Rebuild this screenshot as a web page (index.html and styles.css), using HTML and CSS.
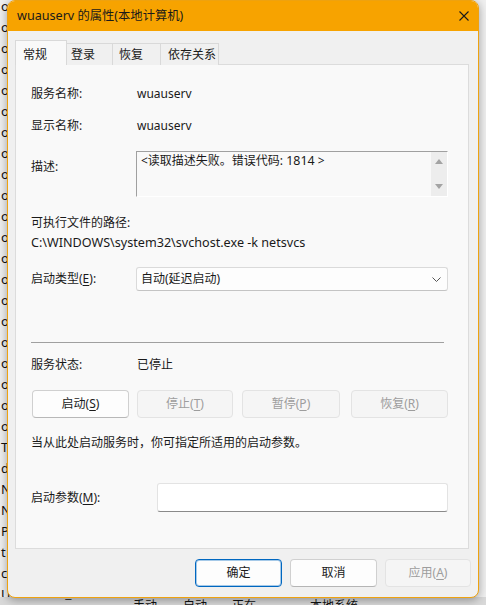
FILE: index.html
```html
<!DOCTYPE html>
<html lang="zh-CN">
<head>
<meta charset="utf-8">
<title>wuauserv 的属性(本地计算机)</title>
<link rel="stylesheet" href="styles.css">
</head>
<body>
<div class="desktop">
  <div class="bg-col">o<br>o<br>o<br>o<br>o<br>o<br>o<br>o<br>o<br>o<br>o<br>o<br>o<br>o<br>o<br>o<br>o<br>o<br>o<br>o<br>o<br>T<br>d<br>N<br>N<br>P<br>t<br>cs<br>Us</div>
  <div class="bg-bottom"><span class="b1">_</span><span class="b2">手动</span><span class="b3">自动</span><span class="b4">正在</span><span class="b5">本地系统</span></div>

  <div class="window">
    <div class="titlebar">
      <span class="title"><span class="lat-t">wuauserv</span> 的属性(本地计算机)</span>
      <svg class="close" width="10" height="10" viewBox="0 0 10 10"><path d="M0.5 0.5 L9.5 9.5 M9.5 0.5 L0.5 9.5" stroke="#1a1a1a" stroke-width="1.1" fill="none"/></svg>
    </div>
    <div class="client">
      <div class="tabs">
        <div class="tab tab-sel">常规</div>
        <div class="tab tab-2">登录</div>
        <div class="tab tab-3">恢复</div>
        <div class="tab tab-4">依存关系</div>
      </div>
      <div class="panel">
        <div class="row r-name"><span class="label">服务名称:</span><span class="value">wuauserv</span></div>
        <div class="row r-disp"><span class="label">显示名称:</span><span class="value">wuauserv</span></div>
        <div class="row r-desc">
          <span class="label label-desc">描述:</span>
          <div class="descbox">
            <div class="desctext">&lt;读取描述失败。错误代码: <span class="lat">1814</span> &gt;</div>
            <div class="vscroll">
              <span class="arr arr-up"></span>
              <span class="arr arr-down"></span>
            </div>
          </div>
        </div>
        <div class="line r-pathlabel">可执行文件的路径:</div>
        <div class="line r-path">C:\WINDOWS\system32\svchost.exe -k netsvcs</div>
        <div class="row r-type">
          <span class="label">启动类型(<u>E</u>):</span>
          <div class="combo">
            <span>自动(延迟启动)</span>
            <svg class="chev" width="9" height="5" viewBox="0 0 9 5"><path d="M0.5 0.5 L4.5 4.5 L8.5 0.5" stroke="#555" stroke-width="1" fill="none"/></svg>
          </div>
        </div>
        <div class="sep"></div>
        <div class="row r-status"><span class="label">服务状态:</span><span class="value">已停止</span></div>
        <div class="btnrow">
          <div class="btn b-start">启动(<u>S</u>)</div>
          <div class="btn btn-dis b-stop">停止(<u>T</u>)</div>
          <div class="btn btn-dis b-pause">暂停(<u>P</u>)</div>
          <div class="btn btn-dis b-resume">恢复(<u>R</u>)</div>
        </div>
        <div class="line r-hint">当从此处启动服务时，你可指定所适用的启动参数。</div>
        <div class="row r-param">
          <span class="label label-param">启动参数(<u>M</u>):</span>
          <div class="input"></div>
        </div>
      </div>
      <div class="dlgbtns">
        <div class="dbtn dbtn-def">确定</div>
        <div class="dbtn">取消</div>
        <div class="dbtn dbtn-dis">应用(<u>A</u>)</div>
      </div>
    </div>
  </div>
</div>
</body>
</html>
```
FILE: styles.css
```css
* { box-sizing: border-box; }
html, body {
  margin: 0;
  padding: 0;
  width: 486px;
  height: 605px;
  overflow: hidden;
}
body {
  background: #e4e4e4;
  font-family: "Noto Sans", "Noto Sans CJK SC", sans-serif;
  font-size: 12px;
  color: #1a1a1a;
}
u { text-decoration: underline; text-underline-offset: 2px; }
.lat { font-size: 12.4px; }
.lat-t { font-size: 12.6px; }
.desktop {
  position: relative;
  width: 486px;
  height: 605px;
  background: #f0f0f0;
}
.bg-col {
  position: absolute;
  left: 1px;
  top: -4px;
  line-height: 21px;
  font-size: 13px;
  color: #111;
  font-family: "Noto Sans", sans-serif;
}
.bg-bottom {
  position: absolute;
  left: 0;
  top: 597px;
  height: 8px;
  width: 486px;
  background: #d9d9d9;
  font-family: "Noto Sans CJK SC", sans-serif;
  font-size: 12px;
  line-height: 16px;
  color: #111;
  overflow: hidden;
}
.bg-bottom span { position: absolute; top: 0; }
.b1 { left: 65px; top: -12px !important; }
.b2 { left: 133px; }
.b3 { left: 183px; }
.b4 { left: 232px; }
.b5 { left: 310px; }

.window {
  position: absolute;
  left: 7px;
  top: 0;
  width: 472px;
  height: 598px;
  border: 1px solid #eea20f;
  border-radius: 8px;
  background: #f0f0f0;
  box-shadow: 0 2px 10px rgba(0,0,0,0.35);
  overflow: hidden;
  display: flex;
  flex-direction: column;
}
.titlebar {
  height: 30px;
  flex: none;
  background: #f7a300;
  display: flex;
  align-items: center;
  justify-content: space-between;
  padding: 0 9px 0 9px;
}
.title { line-height: 16px; color: #1a1a1a; font-size: 12.3px; }
.close { display: block; margin-top: -1px; }

.client {
  flex: 1;
  padding: 9px 7px 0 7px;
  display: flex;
  flex-direction: column;
}
.tabs {
  display: flex;
  align-items: flex-end;
  height: 25px;
  position: relative;
  z-index: 2;
  margin-bottom: -1px;
}
.tab {
  height: 22px;
  border: 1px solid #d9d9d9;
  border-left: none;
  border-bottom: none;
  background: #f0f0f0;
  line-height: 20px;
  padding-top: 1px;
}
.tab-sel {
  height: 25px;
  width: 52px;
  border-left: 1px solid #d9d9d9;
  background: #f9f9f9;
  padding-left: 7px;
  padding-top: 4px;
}
.tab-2 { width: 46px; padding-left: 4px; }
.tab-3 { width: 48px; padding-left: 6px; }
.tab-4 { width: 58px; padding-left: 7px; }

.panel {
  height: 485px;
  width: 454px;
  border: 1px solid #dcdcdc;
  background: #f9f9f9;
  padding: 21px 0 0 15px;
  position: relative;
  z-index: 1;
}
.row {
  display: flex;
  align-items: center;
}
.label {
  width: 105px;
  flex: none;
  line-height: 16px;
}
.value { line-height: 16px; padding-left: 1px; }
.line { line-height: 16px; }
.r-name { height: 16px; }
.r-disp { height: 16px; margin-top: 16px; }
.r-desc { margin-top: 17px; align-items: flex-start; }
.label-desc { padding-top: 8px; }
.descbox {
  width: 312px;
  height: 46px;
  border-top: 1px solid #a0a0a0;
  border-left: 1px solid #a0a0a0;
  border-right: 1px solid #ffffff;
  border-bottom: 1px solid #ffffff;
  background: #f9f9f9;
  display: flex;
}
.desctext {
  flex: 1;
  padding: 1px 0 0 4px;
  line-height: 16px;
}
.vscroll {
  width: 16px;
  background: #ededed;
  display: flex;
  flex-direction: column;
  justify-content: space-between;
  align-items: center;
  padding: 7px 0 7px;
}
.arr {
  width: 0;
  height: 0;
  border-left: 4.5px solid transparent;
  border-right: 4.5px solid transparent;
}
.arr-up { border-bottom: 5px solid #a3a3a3; }
.arr-down { border-top: 5px solid #a3a3a3; }
.r-pathlabel { margin-top: 18px; }
.r-path { margin-top: 4px; font-size: 12.6px; }
.r-type { margin-top: 16px; }
.combo {
  width: 312px;
  height: 24px;
  background: #fdfdfd;
  border: 1px solid #dadada;
  border-bottom-color: #c4c4c4;
  border-radius: 3px;
  display: flex;
  align-items: center;
  justify-content: space-between;
  padding: 0 6px 0 4px;
  line-height: 16px;
}
.chev { display: block; }
.sep {
  margin-top: 51px;
  width: 413px;
  height: 1px;
  background: #a0a0a0;
}
.r-status { height: 16px; margin-top: 14px; }
.btnrow {
  margin-top: 17px;
  display: flex;
}
.btn {
  height: 28px;
  border: 1px solid #d0d0d0;
  border-bottom-color: #b8b8b8;
  border-radius: 4px;
  background: #fdfdfd;
  display: flex;
  align-items: center;
  justify-content: center;
  line-height: 16px;
}
.b-start { width: 97px; margin-left: 1px; }
.b-stop { width: 96px; margin-left: 8px; }
.b-pause { width: 98px; margin-left: 9px; }
.b-resume { width: 97px; margin-left: 11px; }
.btn-dis {
  background: #f5f5f5;
  border-color: #e3e3e3;
  color: #9d9d9d;
}
.r-hint { margin-top: 17px; }
.r-param { margin-top: 32px; }
.label-param { width: 126px; }
.input {
  width: 291px;
  height: 29px;
  background: #ffffff;
  border: 1px solid #e3e3e3;
  border-bottom: 1px solid #8a8a8a;
  border-radius: 3px;
}

.dlgbtns {
  margin-top: 10px;
  display: flex;
  justify-content: flex-end;
  gap: 8px;
}
.dbtn {
  width: 87px;
  height: 28px;
  border: 1px solid #d0d0d0;
  border-bottom-color: #b5b5b5;
  border-radius: 4px;
  background: #fdfdfd;
  display: flex;
  align-items: center;
  justify-content: center;
  line-height: 16px;
}
.dbtn-def {
  border: 1px solid #0067c0;
  box-shadow: inset 0 0 0 1px rgba(0,103,192,0.35);
}
.dbtn-dis {
  width: 86px;
  background: #f5f5f5;
  border-color: #e3e3e3;
  color: #9d9d9d;
}
```
